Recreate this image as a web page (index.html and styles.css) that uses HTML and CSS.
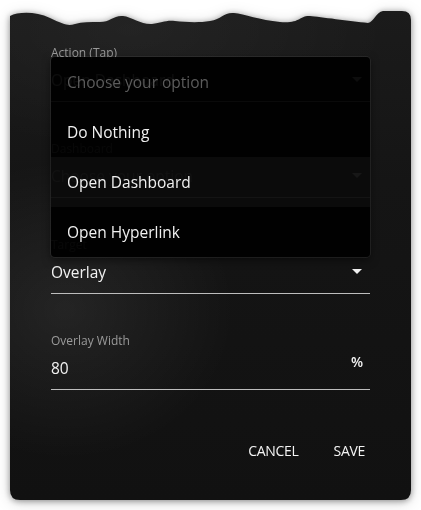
FILE: index.html
```html
<!DOCTYPE html>
<html lang="en">
<head>
<meta charset="utf-8">
<title>Action settings</title>
<link rel="stylesheet" href="styles.css">
</head>
<body>
<div class="stage">
  <div class="card-wrap">
    <div class="card">
      <form class="form">
        <div class="fields">
          <div class="field">
            <div class="label">Action (Tap)</div>
            <div class="control"><span class="value">Open Dashboard</span><span class="caret"></span></div>
          </div>
          <div class="field">
            <div class="label">Dashboard</div>
            <div class="control"><span class="value muted">Choose your option</span><span class="caret"></span></div>
          </div>
          <div class="field">
            <div class="label">Target</div>
            <div class="control"><span class="value">Overlay</span><span class="caret"></span></div>
          </div>
          <div class="field">
            <div class="label">Overlay Width</div>
            <div class="control"><span class="value">80</span><span class="suffix">%</span></div>
          </div>
        </div>
        <div class="actions">
          <button type="button" class="btn">CANCEL</button>
          <button type="button" class="btn">SAVE</button>
        </div>
      </form>
      <ul class="menu">
        <li class="item placeholder">Choose your option</li>
        <li class="item">Do Nothing</li>
        <li class="item active">Open Dashboard</li>
        <li class="item">Open Hyperlink</li>
      </ul>
    </div>
  </div>
</div>
</body>
</html>
```

FILE: styles.css
```css
* { box-sizing: border-box; }
html, body { margin: 0; padding: 0; background: #ffffff; }
body {
  font-family: "Open Sans", "Noto Sans", "Liberation Sans", sans-serif;
  width: 421px;
  height: 510px;
  overflow: hidden;
}
.stage { padding: 10px 10px 10px 10px; }
.card-wrap {
  width: 401px;
  height: 490px;
  filter: drop-shadow(0 1px 3px rgba(0,0,0,0.4)) drop-shadow(0 2px 7px rgba(0,0,0,0.15));
}
.card {
  position: relative;
  width: 401px;
  height: 490px;
  clip-path: path('M0 6 C8 2, 25 1, 40 8 S58 16, 65 14 S80 12, 90 12 S104 5, 113 6 S132 15, 142 14 S155 10, 165 11 S188 13, 200 11 S214 2, 224 3 S250 10, 270 12 S290 5, 300 6 S340 11, 358 13 C364 12, 366 2, 373 1 L392 1 Q401 1, 401 10 L401 480 Q401 490, 391 490 L10 490 Q0 490, 0 480 Z');
  background:
    radial-gradient(ellipse 170px 150px at 55px 300px, rgba(255,255,255,0.07), rgba(255,255,255,0) 100%),
    radial-gradient(ellipse 260px 120px at 120px 20px, rgba(255,255,255,0.04), rgba(255,255,255,0) 100%),
    linear-gradient(180deg, #1b1b1b 0%, #151515 35%, #111111 100%);
  padding: 36px 41px 0 41px;
}
.form { display: flex; flex-direction: column; }
.fields { display: flex; flex-direction: column; gap: 40px; }
.label {
  font-size: 12px;
  line-height: 14px;
  color: #9a9a9a;
}
.control {
  height: 42px;
  display: flex;
  align-items: center;
  border-bottom: 1px solid #bdbdbd;
  padding-bottom: 2px;
}
.value {
  flex: 1;
  font-size: 15.5px;
  line-height: 20px;
  color: #f2f2f2;
}
.value.muted { color: #8a8a8a; }
.caret {
  width: 0; height: 0;
  border-left: 5px solid transparent;
  border-right: 5px solid transparent;
  border-top: 5px solid #f0f0f0;
  margin-right: 8px;
}
.suffix {
  align-self: flex-start;
  margin-top: 5px;
  margin-right: 7px;
  font-size: 14px;
  line-height: 18px;
  color: #f2f2f2;
  font-weight: 600;
}
.actions {
  display: flex;
  justify-content: flex-end;
  gap: 35px;
  margin-top: 43px;
  padding-right: 5px;
}
.btn {
  background: none;
  border: 0;
  padding: 0;
  height: 36px;
  line-height: 36px;
  font-family: inherit;
  font-size: 14px;
  color: #f4f4f4;
  letter-spacing: -0.3px;
}
.menu {
  position: absolute;
  top: 47px;
  left: 41px;
  width: 319px;
  margin: 0;
  padding: 0;
  list-style: none;
  background: rgba(0,0,0,0.95);
  border-radius: 4px;
  box-shadow: 0 0 0 1px rgba(255,255,255,0.07), 0 3px 8px rgba(0,0,0,0.5);
  overflow: hidden;
}
.item {
  height: 50px;
  display: flex;
  align-items: center;
  padding-left: 16px;
  font-size: 15.5px;
  color: #f0f0f0;
}
.item.placeholder { color: #5c5c5c; }
.item.active { background: rgba(255,255,255,0.045); }
```
